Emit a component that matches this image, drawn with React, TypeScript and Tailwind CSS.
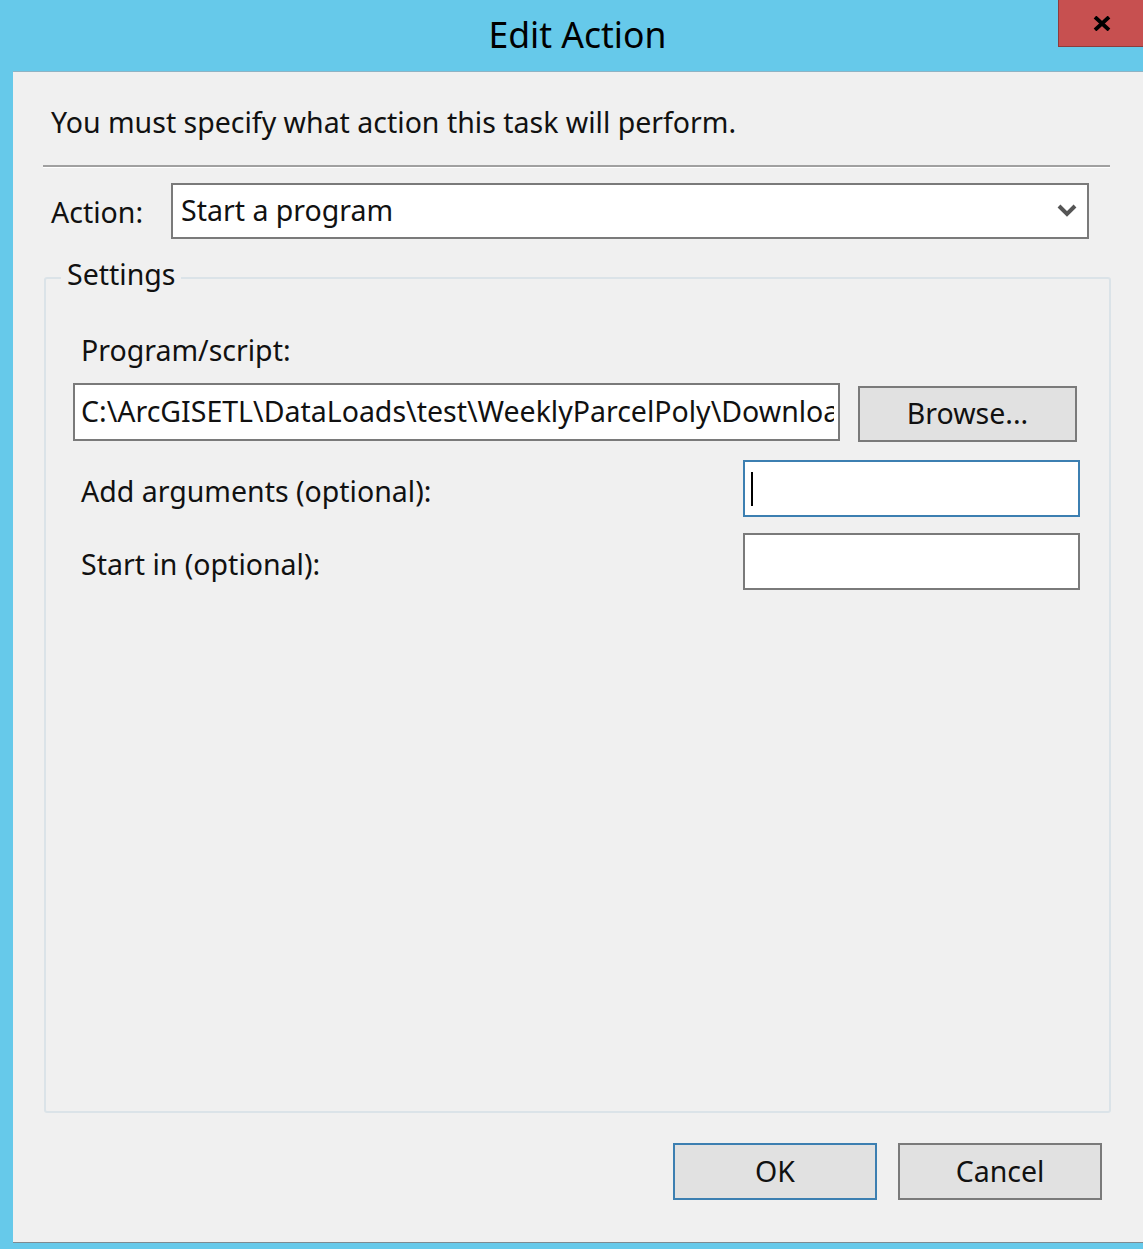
import React from "react";

const font = { fontFamily: '"Noto Sans", "Open Sans", sans-serif' };

export default function App() {
  return (
    <div
      className="w-[1143px] h-[1249px] bg-[#66c9ea] relative overflow-hidden text-[#111]"
      style={font}
    >
      {/* Title bar */}
      <div className="h-[71px] flex items-center justify-center">
        <span className="text-[35.5px] leading-none text-black pb-[2px] ml-[12px]">Edit Action</span>
      </div>
      <div className="absolute top-0 left-[1058px] w-[100px] h-[47px] bg-[#c75050] border-l border-b border-[#8c3c3c] flex items-center pl-[34px]">
        <svg width="18" height="15" viewBox="0 0 18 15">
          <path d="M2 1 L16 14 M16 1 L2 14" stroke="#000" strokeWidth="3.8" strokeLinecap="butt" />
        </svg>
      </div>

      {/* Client area */}
      <div className="ml-[13px] w-[1130px] h-[1171px] bg-[#f0f0f0] border-t border-[#8fb3c4] shadow-[0_1px_0_#7f8a90]">
        <div className="pt-[31px] pl-[38px] text-[28.5px] leading-[38px]">
          You must specify what action this task will perform.
        </div>
        <div className="mt-[24px] ml-[30px] w-[1067px] h-[3px] border-t-2 border-[#a0a0a0] bg-white" />

        {/* Action row */}
        <div className="mt-[15px] flex items-center">
          <div className="pl-[38px] w-[158px] text-[28.5px] leading-[38px] pt-[2px]">Action:</div>
          <div className="w-[918px] h-[56px] bg-white border-2 border-[#7a7a7a] flex items-center justify-between pl-[8px] pr-[10px]">
            <span className="text-[28.5px] leading-[38px] pb-[2px]">Start a program</span>
            <svg width="20" height="14" viewBox="0 0 20 14">
              <path d="M2 2 L10 10 L18 2" stroke="#555" strokeWidth="4" fill="none" />
            </svg>
          </div>
        </div>

        {/* Settings group */}
        <div className="relative mt-[38px] ml-[31px] w-[1067px] h-[836px] border-2 border-[#dbe3e8] rounded-[3px]">
          <div className="absolute left-[15px] top-[-24px] bg-[#f0f0f0] px-[6px] text-[28.5px] leading-[38px]">
            Settings
          </div>
          <div className="pt-[52px] pl-[35px] text-[28.5px] leading-[38px]">Program/script:</div>
          <div className="mt-[14px] flex items-start">
            <div className="ml-[27px] w-[767px] h-[58px] bg-white border-2 border-[#7a7a7a] overflow-hidden flex items-center pl-[6px] pr-[4px]">
              <span className="text-[28.5px] leading-[38px] whitespace-nowrap pb-[2px] overflow-hidden">
                C:\ArcGISETL\DataLoads\test\WeeklyParcelPoly\Downloa
              </span>
            </div>
            <div className="ml-[18px] mt-[3px] w-[219px] h-[56px] bg-[#e1e1e1] border-2 border-[#7a7a7a] flex items-center justify-center">
              <span className="text-[28.5px] leading-[38px] pb-[2px]">Browse...</span>
            </div>
          </div>

          <div className="mt-[18px] flex items-center">
            <div className="pl-[35px] w-[697px] text-[28.5px] leading-[38px] pt-[4px]">Add arguments (optional):</div>
            <div className="w-[337px] h-[57px] bg-white border-2 border-[#3c7fb1] flex items-center pl-[6px]">
              <div className="w-[2px] h-[34px] bg-black" />
            </div>
          </div>

          <div className="mt-[16px] flex items-center">
            <div className="pl-[35px] w-[697px] text-[28.5px] leading-[38px] pt-[4px]">Start in (optional):</div>
            <div className="w-[337px] h-[57px] bg-white border-2 border-[#7a7a7a]" />
          </div>
        </div>

        {/* Buttons */}
        <div className="mt-[30px] flex pl-[660px] gap-[21px]">
          <div className="w-[204px] h-[57px] bg-[#e1e1e1] border-2 border-[#3c7fb1] flex items-center justify-center">
            <span className="text-[28.5px] leading-[38px] pb-[2px]">OK</span>
          </div>
          <div className="w-[204px] h-[57px] bg-[#e1e1e1] border-2 border-[#7a7a7a] flex items-center justify-center">
            <span className="text-[28.5px] leading-[38px] pb-[2px]">Cancel</span>
          </div>
        </div>
      </div>
    </div>
  );
}
